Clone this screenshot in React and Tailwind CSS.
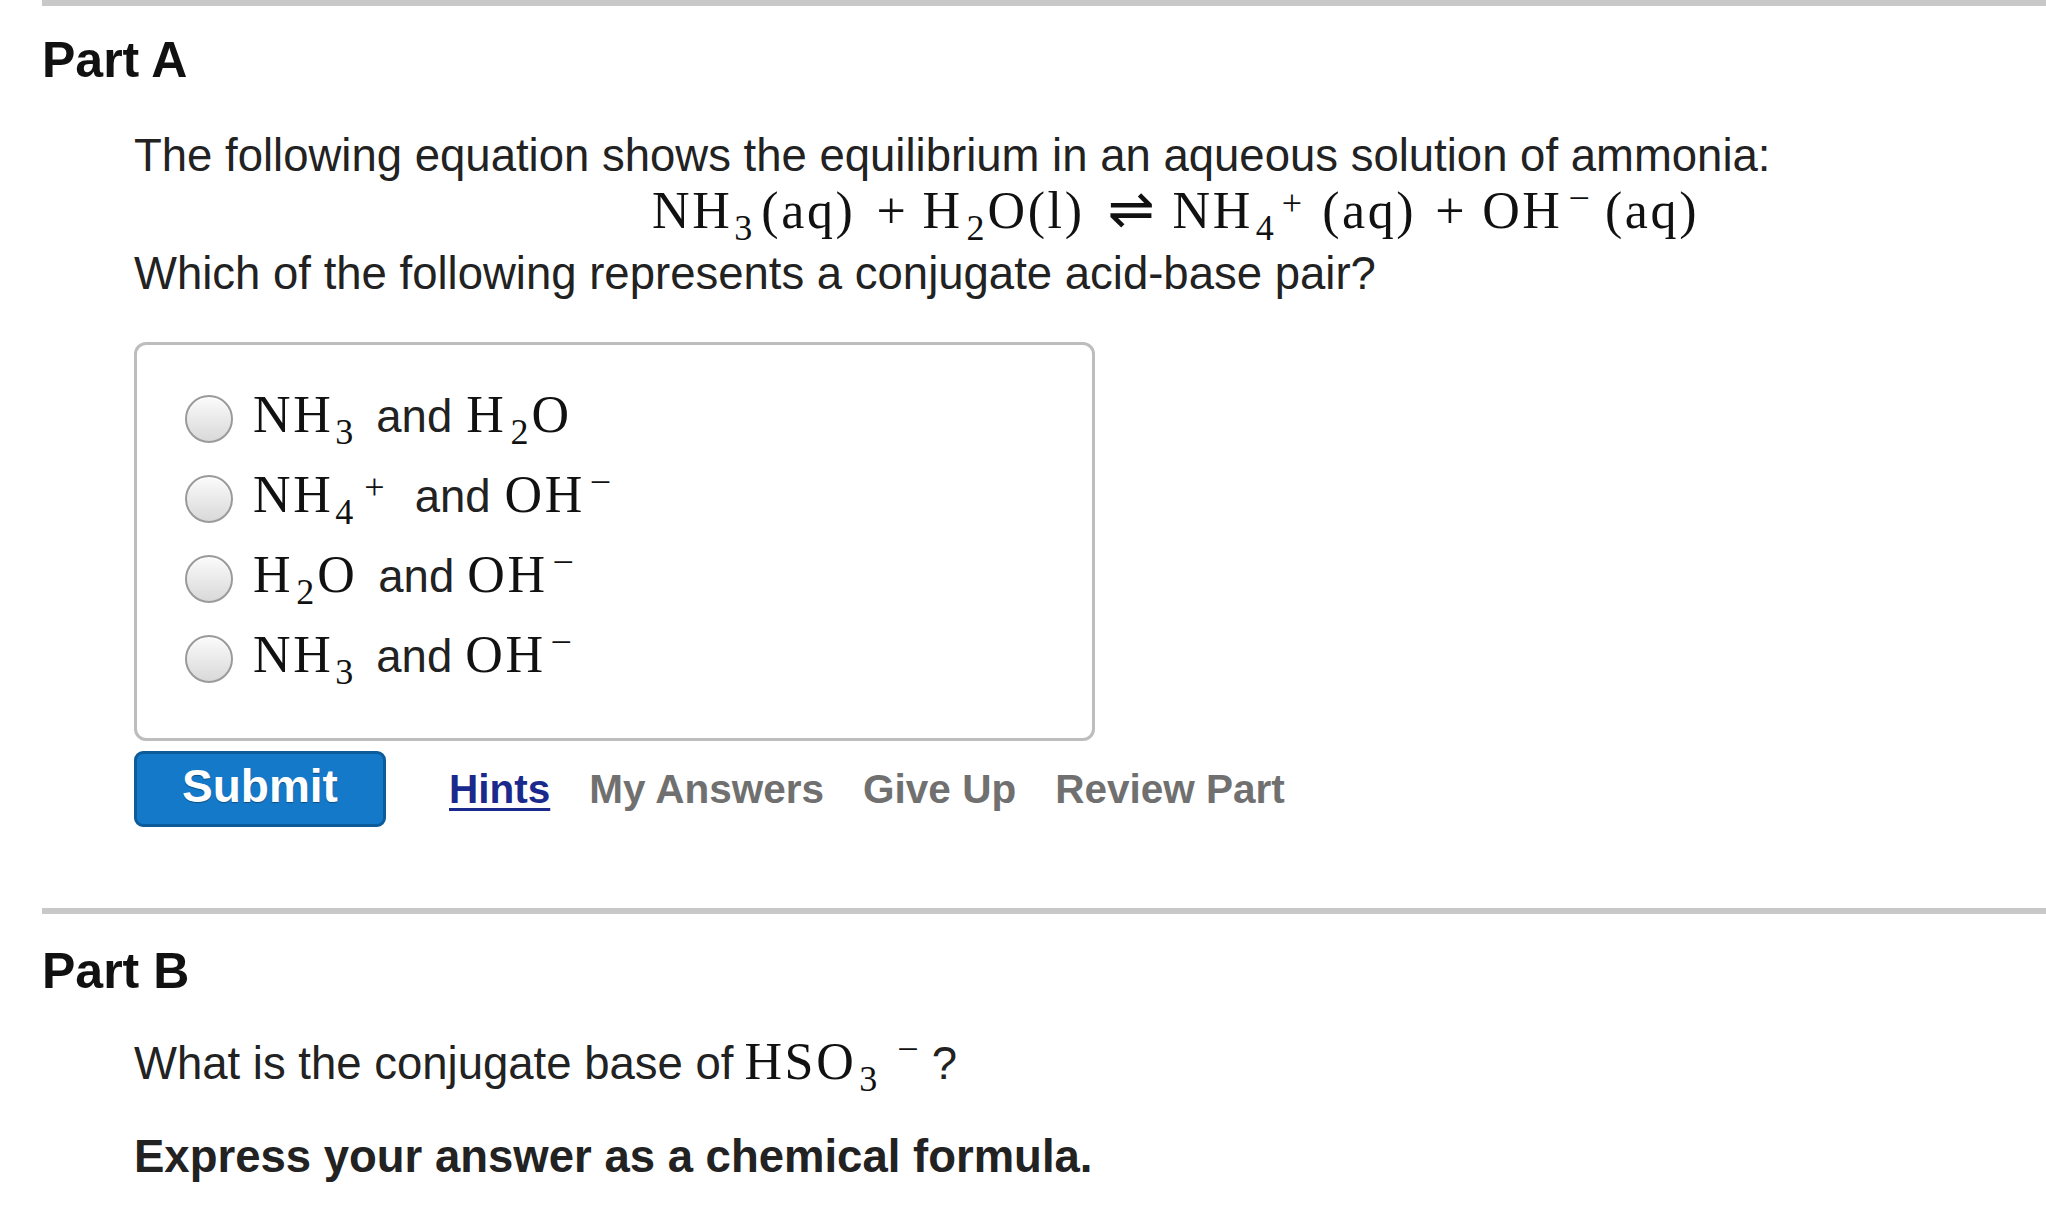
const SERIF = "font-['Liberation_Serif','Times_New_Roman',serif]";

function B({ children, className = "" }) {
  return (
    <span className={`${SERIF} text-[52px] tracking-[2.6px] text-[#111] ${className}`}>
      {children}
    </span>
  );
}

function Sub({ children, className = "" }) {
  return (
    <span className={`${SERIF} text-[36px] relative top-[12px] text-[#111] ${className}`}>
      {children}
    </span>
  );
}

function SupPlus({ className = "" }) {
  return (
    <span className={`${SERIF} text-[36px] relative top-[-13px] text-[#111] ${className}`}>+</span>
  );
}

function SupMinus({ className = "" }) {
  return (
    <span className={`${SERIF} text-[38px] relative top-[-17px] text-[#111] ${className}`}>−</span>
  );
}

function And({ className = "" }) {
  return <span className={`text-[45.5px] text-[#222] ${className}`}>and</span>;
}

function Radio() {
  return (
    <span className="block w-[48px] h-[48px] shrink-0 rounded-full border-2 border-[#9a9a9a] bg-linear-to-b from-[#fbfbfb] to-[#d9d9d9] shadow-[inset_0_1px_1px_rgba(255,255,255,0.9)]" />
  );
}

function OptionRow({ children }) {
  return (
    <label className="flex items-center h-[80px]">
      <Radio />
      <span className="ml-[20px] mb-[9px] h-[60px] flex items-baseline leading-[60px]">
        {children}
      </span>
    </label>
  );
}

export default function App() {
  return (
    <div className="min-h-screen w-full bg-white pl-[42px] font-['Liberation_Sans',Arial,Helvetica,sans-serif] text-[#222]">
      <div className="h-[6px] bg-[#c8c8c8]" />

      <h2 className="mt-[29px] text-[50px] leading-[50px] font-bold text-[#111]">Part A</h2>

      <div className="pl-[92px]">
        <p className="mt-[45px] text-[45.5px] leading-[52px]">
          The following equation shows the equilibrium in an aqueous solution of ammonia:
        </p>

        <div className="mt-[9px] h-[40px] leading-[40px] flex items-baseline pl-[518px] whitespace-nowrap">
          <B>NH</B>
          <Sub className="ml-[2px]">3</Sub>
          <B className="ml-[9px]">(aq)</B>
          <B className="ml-[21px]">+</B>
          <B className="ml-[14px]">H</B>
          <Sub className="ml-[4px]">2</Sub>
          <B className="ml-[3px]">O(l)</B>
          <span className="ml-[23px] font-['DejaVu_Sans',sans-serif] text-[56px] leading-[30px] text-[#111]">⇌</span>
          <B className="ml-[18px]">NH</B>
          <Sub className="ml-[3px]">4</Sub>
          <SupPlus className="ml-[8px]" />
          <B className="ml-[20px]">(aq)</B>
          <B className="ml-[19px]">+</B>
          <B className="ml-[15px]">OH</B>
          <SupMinus className="ml-[6px]" />
          <B className="ml-[15px]">(aq)</B>
        </div>

        <p className="mt-[17px] text-[45.5px] leading-[52px]">
          Which of the following represents a conjugate acid-base pair?
        </p>

        <div className="mt-[42px] w-[961px] h-[399px] rounded-[12px] border-[3px] border-[#bdbdbd] pt-[34px] pl-[48px]">
          <OptionRow>
            <B>NH</B>
            <Sub className="ml-[2px]">3</Sub>
            <And className="ml-[23px]" />
            <B className="ml-[14px]">H</B>
            <Sub className="ml-[4px]">2</Sub>
            <B className="ml-[3px]">O</B>
          </OptionRow>
          <OptionRow>
            <B>NH</B>
            <Sub className="ml-[2px]">4</Sub>
            <SupPlus className="ml-[11px]" />
            <And className="ml-[30px]" />
            <B className="ml-[14px]">OH</B>
            <SupMinus className="ml-[5px]" />
          </OptionRow>
          <OptionRow>
            <B>H</B>
            <Sub className="ml-[3px]">2</Sub>
            <B className="ml-[3px]">O</B>
            <And className="ml-[21px]" />
            <B className="ml-[13px]">OH</B>
            <SupMinus className="ml-[5px]" />
          </OptionRow>
          <OptionRow>
            <B>NH</B>
            <Sub className="ml-[2px]">3</Sub>
            <And className="ml-[23px]" />
            <B className="ml-[13px]">OH</B>
            <SupMinus className="ml-[5px]" />
          </OptionRow>
        </div>

        <div className="mt-[10px] flex items-center h-[76px]">
          <button className="h-[76px] w-[252px] rounded-[9px] border-[3px] border-[#0c5c9c] bg-[#1479c9] text-white font-bold text-[46px] leading-[50px] pb-[6px] flex items-center justify-center [text-shadow:0_1px_1px_rgba(0,0,0,0.35)]">
            Submit
          </button>
          <div className="ml-[63px] flex gap-[39px] text-[40.5px] font-bold leading-[50px] whitespace-nowrap">
            <a className="text-[#1a2a8c] underline decoration-[3px] underline-offset-[5px] cursor-pointer">Hints</a>
            <a className="text-[#707070] cursor-pointer">My Answers</a>
            <a className="text-[#707070] cursor-pointer">Give Up</a>
            <a className="text-[#707070] cursor-pointer">Review Part</a>
          </div>
        </div>
      </div>

      <div className="mt-[81px] h-[6px] bg-[#c8c8c8]" />

      <h2 className="mt-[32px] text-[50px] leading-[50px] font-bold text-[#111]">Part B</h2>

      <div className="pl-[92px] pb-[40px]">
        <div className="mt-[40px] h-[52px] leading-[52px] flex items-baseline whitespace-nowrap">
          <span className="text-[45.5px]">What is the conjugate base of</span>
          <B className="ml-[11px]">HSO</B>
          <Sub className="ml-[3px]">3</Sub>
          <SupMinus className="ml-[20px]" />
          <span className="ml-[13px] text-[45.5px]">?</span>
        </div>
        <p className="mt-[43px] text-[45.5px] leading-[52px] font-bold">
          Express your answer as a chemical formula.
        </p>
      </div>
    </div>
  );
}
